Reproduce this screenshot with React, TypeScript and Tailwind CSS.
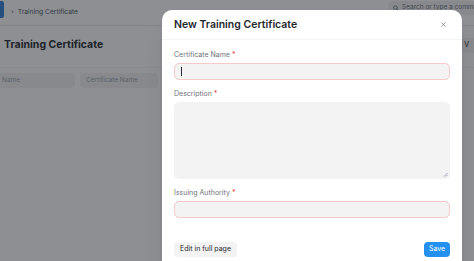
import React from 'react'

function Field({ label, tall, focused }: { label: string; tall?: boolean; focused?: boolean }) {
  return (
    <div className="flex flex-col">
      <label className="text-[7px] leading-[10px] text-[#6f7479] mb-[3px]">
        {label} <span className="text-[#e24c4c]">*</span>
      </label>
      {tall ? (
        <div className="relative h-[77px] rounded-[5px] bg-[#f3f3f4]">
          <svg className="absolute right-[2px] bottom-[2px]" width="5" height="5" viewBox="0 0 5 5">
            <path d="M1 4.5 L4.5 1 M3 4.5 L4.5 3" stroke="#6b7280" strokeWidth="0.6" />
          </svg>
        </div>
      ) : (
        <div className="h-[17px] rounded-[5px] bg-[#f3f3f4] border border-[#f7c9c9] flex items-center px-[6px]">
          {focused && <span className="w-px h-[9px] bg-[#1f2937]" />}
        </div>
      )}
    </div>
  )
}

export default function App() {
  return (
    <div className="relative w-[474px] h-[261px] overflow-hidden bg-white font-['Inter',sans-serif] text-[#1f272e]">
      {/* page behind */}
      <div className="h-[26px] border-b border-[#e5e7eb] flex items-center">
        <div className="w-[4px] h-[17px] -mt-[7px] bg-[#2d7fd8] rounded-r-[2px]" />
        <span className="ml-[7px] text-[7px] text-[#6b7280]">›</span>
        <span className="ml-[4px] text-[6.7px] text-[#4b5563]">Training Certificate</span>
        <div className="ml-auto mb-[10px] w-[86px] h-[14px] rounded-l-[5px] bg-[#f3f3f4] flex items-center pl-[5px] gap-[3px] overflow-hidden">
          <svg width="6" height="6" viewBox="0 0 10 10" fill="none" stroke="#4b5563" strokeWidth="1.2" className="shrink-0">
            <circle cx="4.2" cy="4.2" r="3" />
            <path d="M6.5 6.5 9 9" />
          </svg>
          <span className="text-[6.5px] text-[#6b7280] whitespace-nowrap">Search or type a command</span>
        </div>
      </div>
      <div className="flex items-center h-[38px] pl-[4px]">
        <h1 className="text-[10.5px] font-bold text-[#1f272e]">Training Certificate</h1>
        <div className="ml-auto h-[15px] px-[5px] rounded-l-[5px] bg-[#f3f3f4] text-[7px] flex items-center whitespace-nowrap">
          List V
        </div>
      </div>
      <div className="border-t border-[#eef0f2] mt-[3px] pt-[5px] flex gap-[5px]">
        <div className="w-[75px] h-[15px] rounded-r-[4px] bg-[#f3f3f4] text-[6.5px] text-[#9ca3af] flex items-center pl-[2px]">
          Name
        </div>
        <div className="w-[78px] h-[15px] rounded-[4px] bg-[#f3f3f4] text-[6.5px] text-[#9ca3af] flex items-center pl-[6px]">
          Certificate Name
        </div>
      </div>

      {/* overlay */}
      <div className="absolute inset-0 bg-[#1c2026]/[0.5]" />

      {/* modal */}
      <div className="absolute left-[162px] top-[10px] w-[300px] h-[262px] bg-white rounded-[10px] shadow-xl flex flex-col">
        <div className="h-[30px] px-[12px] flex items-center justify-between border-b border-[#f3f4f6]">
          <h2 className="text-[10.5px] font-semibold text-[#1f272e] pt-[1px]">New Training Certificate</h2>
          <svg width="7" height="7" viewBox="0 0 10 10" stroke="#6b7280" strokeWidth="1" className="mr-[3px]">
            <path d="M2 2 8 8 M8 2 2 8" />
          </svg>
        </div>
        <div className="px-[12px] pt-[10px] flex flex-col gap-[9px]">
          <Field label="Certificate Name" focused />
          <Field label="Description" tall />
          <Field label="Issuing Authority" />
        </div>
        <div className="mt-[24px] px-[12px] flex items-center justify-between">
          <button className="h-[15px] px-[6px] rounded-[4px] bg-[#f3f3f4] text-[7px] text-[#1f272e]">
            Edit in full page
          </button>
          <button className="h-[15px] w-[26px] rounded-[4px] bg-[#2490ef] text-[7px] text-white">Save</button>
        </div>
      </div>
    </div>
  )
}
